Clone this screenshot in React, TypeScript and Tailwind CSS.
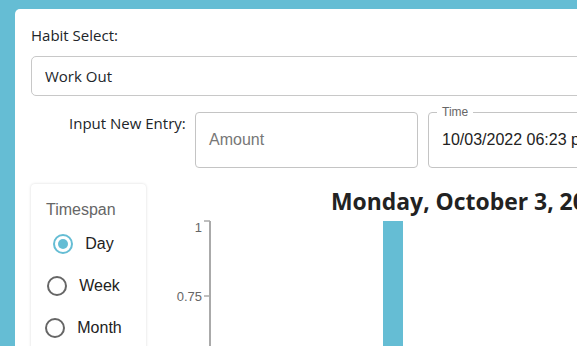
import React from "react"

const segoe = { fontFamily: '"Open Sans", "Noto Sans", sans-serif' }
const arial = { fontFamily: '"Liberation Sans", Arial, sans-serif' }

const timespans = ["Day", "Week", "Month"]

function RadioRow({ label, checked }: { label: string; checked?: boolean }) {
  return (
    <div className="flex h-[42px] items-center justify-center gap-[12px]">
      <span
        className={
          checked
            ? "flex h-[20px] w-[20px] items-center justify-center rounded-full border-2 border-[#65bdd4]"
            : "flex h-[20px] w-[20px] items-center justify-center rounded-full border-2 border-[#666666]"
        }
      >
        {checked && <span className="h-[10px] w-[10px] rounded-full bg-[#65bdd4]" />}
      </span>
      <span className="text-[16px] leading-[24px] text-[#222]" style={arial}>
        {label}
      </span>
    </div>
  )
}

function Chart() {
  return (
    <div className="relative flex-1">
      <div
        className="mt-[4px] whitespace-nowrap pl-[185px] text-[22.9px] font-bold leading-[27px] text-[#222]"
        style={segoe}
      >
        Monday, October 3, 2022
      </div>
      <svg width="440" height="140" className="block" style={arial}>
        <line x1="64" y1="6" x2="64" y2="140" stroke="#aaa" strokeWidth="2" />
        <line x1="58" y1="6" x2="64" y2="6" stroke="#aaa" strokeWidth="1.5" />
        <line x1="58" y1="81" x2="64" y2="81" stroke="#aaa" strokeWidth="1.5" />
        <text x="56" y="17" textAnchor="end" fontSize="13" fill="#666">
          1
        </text>
        <text x="56" y="86" textAnchor="end" fontSize="13" fill="#666">
          0.75
        </text>
        <rect x="237" y="6" width="20" height="140" fill="#65bdd4" />
      </svg>
    </div>
  )
}

export default function App() {
  return (
    <div className="h-[346px] w-[577px] overflow-hidden bg-[#65bdd4] pl-[15px] pt-[9px]">
      <div className="h-[500px] w-[700px] rounded-tl-[5px] bg-white pl-[16px] pt-[15px]">
        <div className="text-[15px] leading-[22px] text-[#212529]" style={segoe}>
          Habit Select:
        </div>
        <div
          className="mt-[10px] flex h-[40px] w-[640px] items-center rounded-[5px] border border-[#c8c8c8] pl-[13px] text-[15px] text-[#212529]"
          style={segoe}
        >
          Work Out
        </div>

        <div className="mt-[16px] flex items-start">
          <div
            className="w-[164px] whitespace-nowrap pl-[38px] text-[15px] leading-[22px] text-[#212529]"
            style={segoe}
          >
            Input New Entry:
          </div>
          <div
            className="flex h-[56px] w-[223px] items-center rounded-[4px] border border-[#c4c4c4] pl-[13px] text-[16px] text-[#777]"
            style={arial}
          >
            Amount
          </div>
          <div
            className="relative ml-[10px] flex h-[56px] w-[223px] items-center rounded-[4px] border border-[#c4c4c4] pl-[13px] text-[16px] text-[#222]"
            style={arial}
          >
            <span className="absolute left-[8px] top-[-7px] bg-white px-[5px] text-[12px] leading-[12px] text-[#666]">
              Time
            </span>
            <span className="whitespace-nowrap">10/03/2022 06:23 pm</span>
          </div>
        </div>

        <div className="mt-[16px] flex">
          <div className="h-[200px] w-[115px] rounded-[4px] bg-white pt-[14px] shadow-[0_0_3px_rgba(0,0,0,0.15)]">
            <div className="pl-[15px] text-[16px] leading-[24px] text-[#666]" style={arial}>
              Timespan
            </div>
            <div className="mt-[1px] pr-[10px]">
              {timespans.map((t) => (
                <RadioRow key={t} label={t} checked={t === "Day"} />
              ))}
            </div>
          </div>
          <Chart />
        </div>
      </div>
    </div>
  )
}
